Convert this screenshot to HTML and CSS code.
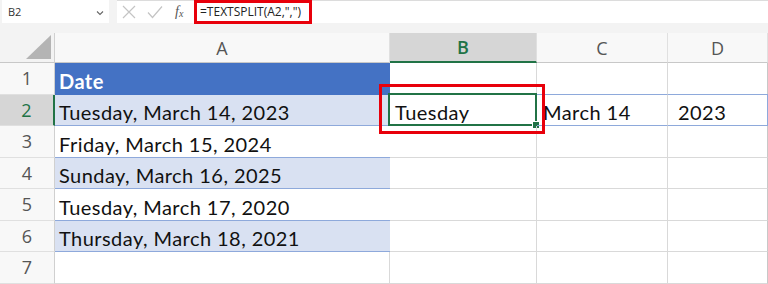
FILE: index.html
```html
<!DOCTYPE html>
<html lang="en">
<head>
    <meta charset="UTF-8">
    <title>TEXTSPLIT</title>
    <link rel="stylesheet" href="styles.css">
</head>
<body>
    <div class="topbar">
        <div class="namebox">
            <span>B2</span>
            <svg class="chevron" width="8" height="6" viewBox="0 0 8 6"><path d="M1 1.5 L4 4.5 L7 1.5" fill="none" stroke="#666" stroke-width="1.1"/></svg>
        </div>
        <div class="formula">
            <div class="tools">
                <svg width="14" height="14" viewBox="0 0 14 14"><path d="M1 1 L13 13 M13 1 L1 13" stroke="#c4c4c4" stroke-width="1.2"/></svg>
                <svg width="16" height="14" viewBox="0 0 16 14"><path d="M1 7.5 L5.5 12.5 L15 1.5" fill="none" stroke="#c4c4c4" stroke-width="1.2"/></svg>
                <span class="fx">f<sub>x</sub></span>
            </div>
            <span class="formula-text">=TEXTSPLIT(A2,",")</span>
        </div>
    </div>

    <div class="sheet">
        <div class="corner">
            <svg width="25" height="24" viewBox="0 0 25 24"><path d="M25 0 L25 24 L0 24 Z" fill="#b4b4b4"/></svg>
        </div>
        <div class="col-head">A</div>
        <div class="col-head active">B</div>
        <div class="col-head">C</div>
        <div class="col-head last">D</div>

        <div class="row-head">1</div>
        <div class="cell title">Date</div>
        <div class="cell"></div>
        <div class="cell"></div>
        <div class="cell last"></div>

        <div class="row-head active">2</div>
        <div class="cell band">Tuesday, March 14, 2023</div>
        <div class="cell selected">Tuesday
            <div class="selection"><span class="handle"></span></div>
            <div class="mark"></div>
        </div>
        <div class="cell spill pad-c">March 14</div>
        <div class="cell spill last pad-d">2023</div>

        <div class="row-head">3</div>
        <div class="cell plain">Friday, March 15, 2024</div>
        <div class="cell"></div>
        <div class="cell"></div>
        <div class="cell last"></div>

        <div class="row-head">4</div>
        <div class="cell band">Sunday, March 16, 2025</div>
        <div class="cell"></div>
        <div class="cell"></div>
        <div class="cell last"></div>

        <div class="row-head">5</div>
        <div class="cell plain">Tuesday, March 17, 2020</div>
        <div class="cell"></div>
        <div class="cell"></div>
        <div class="cell last"></div>

        <div class="row-head">6</div>
        <div class="cell band">Thursday, March 18, 2021</div>
        <div class="cell"></div>
        <div class="cell"></div>
        <div class="cell last"></div>

        <div class="row-head">7</div>
        <div class="cell"></div>
        <div class="cell"></div>
        <div class="cell"></div>
        <div class="cell last"></div>
    </div>
</body>
</html>
```

FILE: styles.css
```css
body {
    margin: 0;
    width: 768px;
    height: 284px;
    overflow: hidden;
    background-color: #f3f3f3;
    font-family: "Open Sans", "Noto Sans", sans-serif;
}

.topbar {
    display: flex;
    height: 33px;
    align-items: flex-start;
}

.namebox {
    display: flex;
    align-items: center;
    justify-content: space-between;
    width: 107px;
    height: 23px;
    margin-left: 2px;
    padding: 0 5px 0 6px;
    box-sizing: border-box;
    background-color: white;
    font-size: 11px;
    color: #333;
}

.chevron {
    margin-top: 2px;
}

.formula {
    display: flex;
    align-items: center;
    flex: 1;
    height: 23px;
    margin-left: 8px;
    background-color: white;
    border-top: 1px solid #dcdcdc;
    box-sizing: border-box;
}

.tools {
    display: flex;
    align-items: center;
    gap: 11px;
    padding-left: 5px;
    width: 72px;
}

.fx {
    font-family: "Liberation Serif", serif;
    font-style: italic;
    font-size: 14px;
    color: #555;
    margin-left: 1px;
}

.fx sub {
    font-size: 10px;
    vertical-align: -1px;
}

.formula-text {
    height: 24px;
    margin-top: -1px;
    padding: 0 8px 0 3px;
    border: 3px solid #e8000b;
    box-sizing: border-box;
    font-size: 12px;
    line-height: 18px;
    color: #222;
}

.sheet {
    display: grid;
    grid-template-columns: 55px 335px 147px 131px 100px;
    grid-template-rows: 30px repeat(7, 31.5px);
    background-color: white;
}

.corner {
    display: flex;
    align-items: flex-end;
    justify-content: flex-end;
    padding: 0 3px 3px 0;
    background-color: #f3f3f3;
    border-right: 1px solid #d0d0d0;
    border-bottom: 1px solid #c8c8c8;
}

.col-head {
    display: flex;
    align-items: center;
    justify-content: center;
    background-color: #f8f8f8;
    border-right: 1px solid #e0e0e0;
    border-bottom: 1px solid #c8c8c8;
    font-size: 18px;
    color: #555;
}

.col-head.active {
    background-color: #d6d6d6;
    border-bottom: 2px solid #217346;
    color: #217346;
    font-weight: 600;
}

.row-head {
    display: flex;
    align-items: center;
    justify-content: center;
    background-color: #f8f8f8;
    border-right: 1px solid #d0d0d0;
    border-bottom: 1px solid #e0e0e0;
    font-size: 18px;
    color: #555;
}

.row-head.active {
    background-color: #d6d6d6;
    border-right: 2px solid #217346;
    color: #217346;
}

.cell {
    position: relative;
    display: flex;
    align-items: flex-end;
    padding: 0 0 1px 4px;
    border-right: 1px solid #d9d9d9;
    border-bottom: 1px solid #d9d9d9;
    font-family: Lato, "Liberation Sans", sans-serif;
    font-size: 20px;
    letter-spacing: 0.45px;
    line-height: 24px;
    color: #111;
    white-space: nowrap;
}

.cell.last {
    border-right: 1px solid #c8c8c8;
}

.cell.title {
    background-color: #4472c4;
    color: white;
    font-weight: bold;
    border-right: none;
    border-bottom-color: #4472c4;
}

.cell.band {
    background-color: #d9e1f2;
    border-right: none;
    border-bottom: 1px solid #8ea9db;
}

.cell.plain {
    border-right: none;
    border-bottom: 1px solid #8ea9db;
}

.cell.spill {
    border-top: 1px solid #8ea9db;
    border-bottom: 1px solid #8ea9db;
    margin-top: -1px;
}

.cell.spill.last {
    border-right: 1px solid #8ea9db;
}

.pad-c {
    padding-left: 6px;
}

.pad-d {
    padding-left: 10px;
}

.cell.selected {
    padding-left: 5px;
}

.selection {
    position: absolute;
    top: -2px;
    left: -2px;
    right: -1px;
    bottom: -1px;
    border: 2px solid #217346;
}

.handle {
    position: absolute;
    right: -5px;
    bottom: -5px;
    width: 6px;
    height: 6px;
    background-color: #217346;
    border: 1px solid white;
}

.mark {
    position: absolute;
    top: -11px;
    left: -11px;
    right: -9px;
    bottom: -9px;
    border: 3px solid #e8000b;
    z-index: 2;
}
```
